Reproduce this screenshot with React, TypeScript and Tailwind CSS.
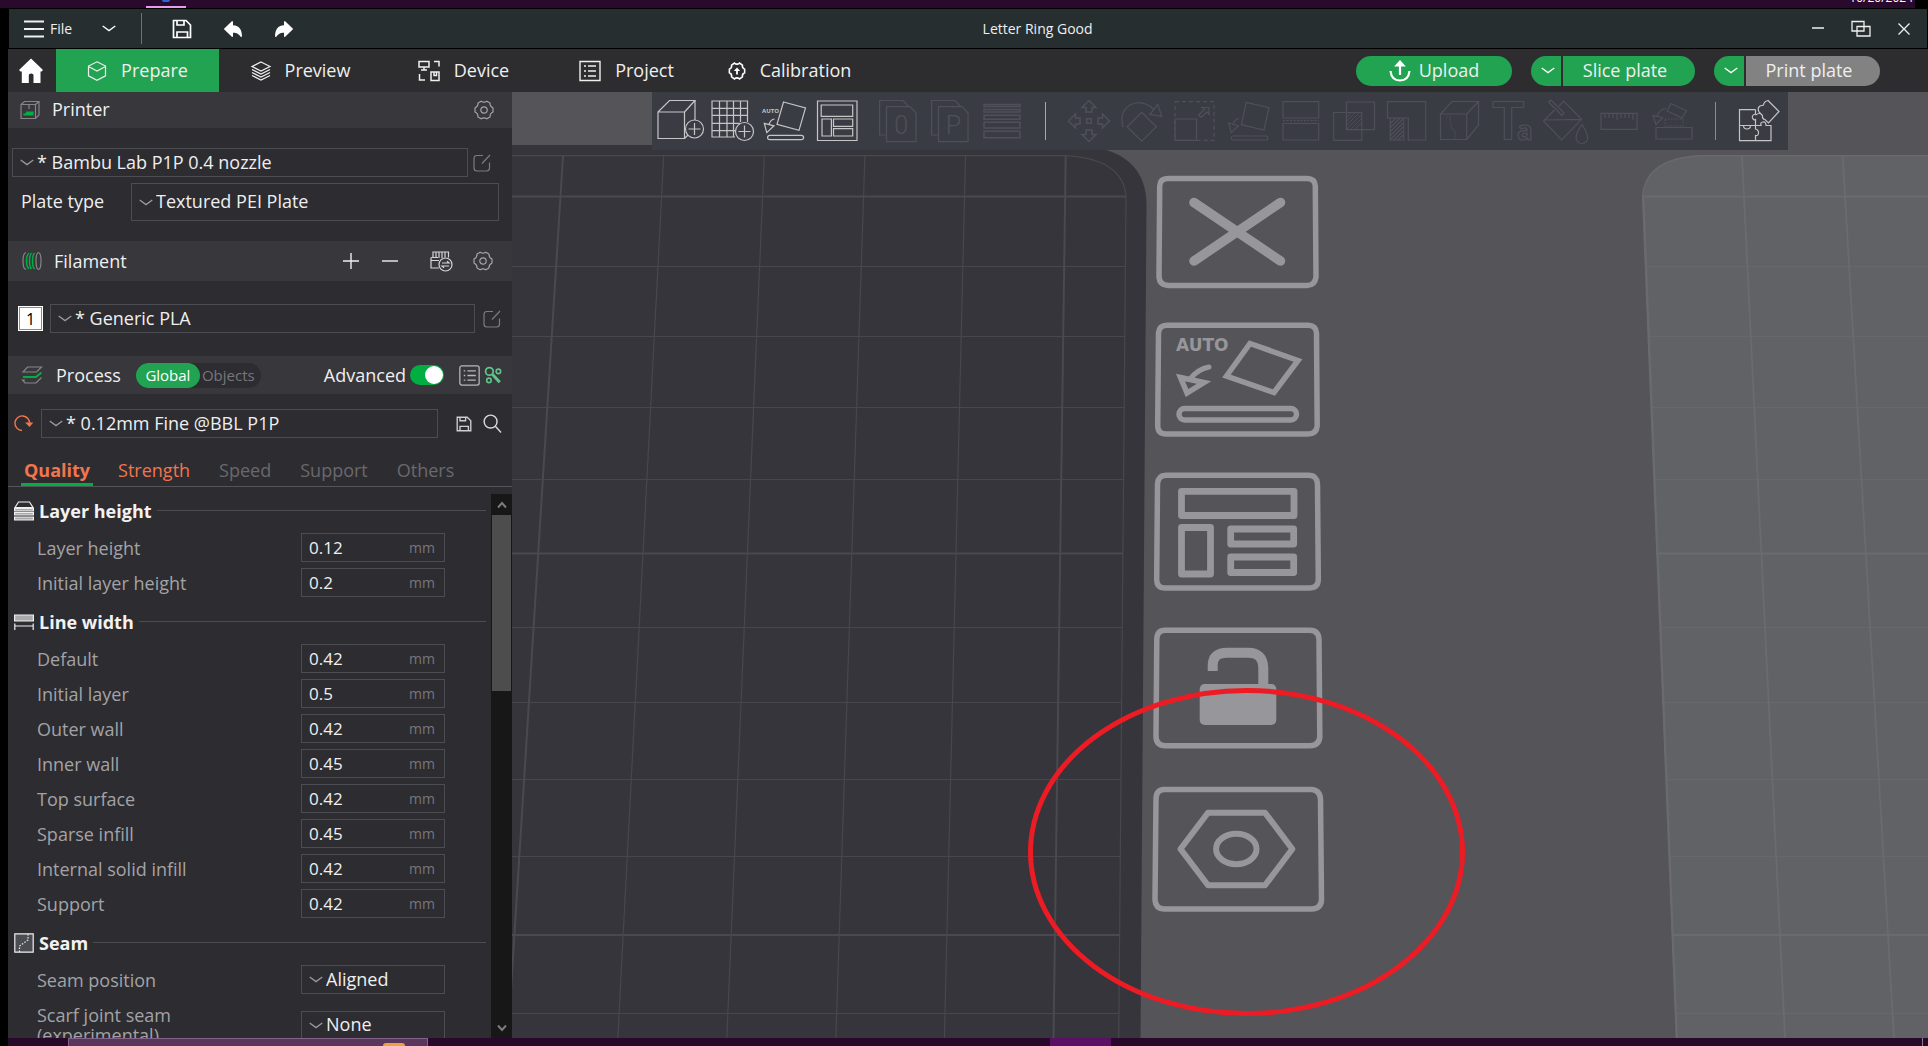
import React from "react";
import { IoArrowUndo, IoArrowRedo } from "react-icons/io5";

const layerHeight = [
  { id: "layer_height", label: "Layer height", value: "0.12" },
  { id: "initial_layer_height", label: "Initial layer height", value: "0.2" },
];

const lineWidth = [
  { id: "lw_default", label: "Default", value: "0.42" },
  { id: "lw_initial", label: "Initial layer", value: "0.5" },
  { id: "lw_outer", label: "Outer wall", value: "0.42" },
  { id: "lw_inner", label: "Inner wall", value: "0.45" },
  { id: "lw_top", label: "Top surface", value: "0.42" },
  { id: "lw_sparse", label: "Sparse infill", value: "0.45" },
  { id: "lw_solid", label: "Internal solid infill", value: "0.42" },
  { id: "lw_support", label: "Support", value: "0.42" },
];

const Svg = ({ size = 20, box = "0 0 20 20", className = "", children }: any) => (
  <svg
    width={size}
    height={size}
    viewBox={box}
    fill="none"
    stroke="currentColor"
    strokeWidth="1.2"
    className={"shrink-0 overflow-visible " + className}
    aria-hidden="true"
  >
    {children}
  </svg>
);

const Chevron = ({ className = "text-[#9a9a9d]", width = 14 }) => (
  <svg
    width={width}
    height={width / 2}
    viewBox="0 0 14 7"
    fill="none"
    stroke="currentColor"
    strokeWidth="1.3"
    className={"shrink-0 " + className}
    aria-hidden="true"
  >
    <path d="M0.7 1 L7 5.6 L13.3 1" />
  </svg>
);

const Gear = () => (
  <Svg className="text-[#a5a5a8]">
    <path d="M7.2 1.2 Q10 3.2 12.8 1.2 L16 3 Q15.8 6.4 19 8 V12 Q15.8 13.6 16 17 L12.8 18.8 Q10 16.8 7.2 18.8 L4 17 Q4.2 13.6 1 12 V8 Q4.2 6.4 4 3 Z" />
    <circle cx="10" cy="10" r="3.2" />
  </Svg>
);

const EditIcon = () => (
  <Svg size={18} box="0 0 18 18" className="text-[#7c7c80]">
    <path d="M10 1.5 H4 Q1 1.5 1 4.5 V14 Q1 17 4 17 H13.500 Q16.500 17 16.500 14 V8.500 M9 9.500 L17 1" />
  </Svg>
);

const SaveIcon = ({ size = 20, className = "" }) => (
  <Svg size={size} className={className}>
    <path d="M1.5 1.5 H14 L18.500 6 V18.500 H1.500 Z M5 1.500 V6 H12 V1.500 M5 18.500 V13 H15.500 V18.500" strokeWidth="1.700" />
  </Svg>
);

const Dropdown = ({ id, value, label, className = "" }: any) => (
  <div className={"flex items-center border border-[#4c4c53] pl-[7px] " + className}>
    <Chevron />
    <select id={id} aria-label={label} className="mb-[2px] min-w-0 flex-1 appearance-none bg-transparent pl-[3px] text-lg leading-6 text-[#efeff0] outline-none">
      <option>{value}</option>
    </select>
  </div>
);

const NumberRow = ({ id, label, value }: any) => (
  <div className="flex h-[29px] items-center">
    <label htmlFor={id} className="w-[287px] shrink-0 pl-[23px] text-lg leading-6 text-[#a3a3a6]">
      {label}
    </label>
    <div className="flex h-full w-36 items-center border border-[#4c4c53] px-[7px]">
      <input id={id} defaultValue={value} className="min-w-0 flex-1 bg-transparent text-[17px] leading-6 text-[#efeff0] outline-none" />
      <span className="pr-[2px] text-sm text-[#77777b]">mm</span>
    </div>
  </div>
);

const SectionTitle = ({ icon, children }: any) => (
  <div className="flex h-[47px] items-center pt-[2px] pr-[5px]">
    {icon}
    <h2 className="px-[5px] text-lg leading-6 font-bold text-[#f2f2f3]">{children}</h2>
    <div className="h-px flex-1 bg-[#4c4c53]" />
  </div>
);

const TitleBar = () => (
  <header className="ml-px mr-px flex h-[39px] items-center bg-[#262e30] text-sm text-[#efefef]">
    <button className="flex items-center gap-[6px] pl-[15px]">
      <Svg>
        <path d="M0 2.500 H20 M0 10 H20 M0 17.500 H20" strokeWidth="1.800" />
      </Svg>
      File
    </button>
    <button aria-label="More" className="ml-[30px]">
      <Chevron className="text-white" />
    </button>
    <div className="ml-[25px] h-[31px] w-px bg-[#6c7273]" />
    <button aria-label="Save" className="ml-[30px] text-white">
      <SaveIcon />
    </button>
    <button aria-label="Undo" className="ml-[30px] text-white">
      <IoArrowUndo size={22} />
    </button>
    <button aria-label="Redo" className="ml-[29px] text-white">
      <IoArrowRedo size={22} />
    </button>
    <h1 className="flex-1 pr-4 text-center">Letter Ring Good</h1>
    <button aria-label="Minimize" className="flex w-[43px] justify-center">
      <Svg size={14} box="0 0 14 14"><path d="M1 6 H13" strokeWidth="1.500" /></Svg>
    </button>
    <button aria-label="Restore" className="flex w-[43px] justify-center">
      <Svg><path d="M1 2.500 H13 V12 H1 Z M6 7.500 H19 V17 H6 Z" strokeWidth="1.300" /></Svg>
    </button>
    <button aria-label="Close" className="mr-[2px] flex w-[43px] justify-center">
      <Svg size={14} box="0 0 14 14"><path d="M1.500 1.500 L12.500 12.500 M12.500 1.500 L1.500 12.500" strokeWidth="1.300" /></Svg>
    </button>
  </header>
);

const tabs = [
  {
    name: "Prepare",
    icon: <Svg><path d="M10 0.800 L18.500 5 V14.800 L10 19.200 L1.500 14.800 V5 Z M1.500 5.500 L10 10 L18.500 5.500" /></Svg>,
  },
  {
    name: "Preview",
    icon: <Svg><path d="M10 1 L19 5.500 L10 10 L1 5.500 Z M1 8.500 L10 13 L19 8.500 M1 11.500 L10 16 L19 11.500 M1 14.500 L10 19 L19 14.500" /></Svg>,
  },
  {
    name: "Device",
    icon: (
      <Svg size={22} box="0 0 22 22">
        <path d="M1 1.500 H11 V7 H1 Z M6 7 V10 M3 10 H9 M16 1.500 H21 V6.500 M1.500 14 V20 H7 M13 12 H21 V20.500 H13 Z M16 12 V15.500 H18.500 V12" strokeWidth="1.500" />
      </Svg>
    ),
  },
  {
    name: "Project",
    icon: (
      <Svg size={22} box="0 0 22 22">
        <path d="M1 1.500 H21 V20.500 H1 Z" strokeWidth="1.400" />
        <path d="M5 6 H7 M9 6 H17 M5 11 H7 M9 11 H17 M5 16 H7 M9 16 H17" strokeWidth="1.500" />
      </Svg>
    ),
  },
  {
    name: "Calibration",
    icon: (
      <Svg size={18} className="text-white">
        <path d="M7.200 1.200 Q10 3.500 12.800 1.200 L16 3.500 Q15.500 6.800 18.500 8 V12 Q15.500 13.200 16 16.500 L12.800 18.800 Q10 16.500 7.200 18.800 L4 16.500 Q4.500 13.200 1.500 12 V8 Q4.500 6.800 4 3.500 Z" strokeWidth="1.700" />
        <path d="M10 14 V8" strokeWidth="2" />
        <path d="M6.500 10 L10 6 L13.500 10 Z" fill="currentColor" stroke="none" />
      </Svg>
    ),
  },
];

const TabBar = () => (
  <nav className="mt-px flex h-[43px] items-center bg-[#2d2d2f] text-lg text-[#efefef]">
    <button aria-label="Home" className="flex h-full w-12 items-center justify-center pr-[2px] text-white">
      <svg width="24" height="26" viewBox="0 0 24 26" fill="currentColor" aria-hidden="true">
        <path d="M12 0.500 L24 12 L22.500 13.500 H21.500 V25 H14.500 V17 Q14.500 15.500 12.200 15.500 Q9.800 15.500 9.800 17 V25 H2.800 V13.500 H1.500 L0 12 Z" />
      </svg>
    </button>
    {tabs.map((tab, i) => (
      <button key={tab.name} className={"flex h-full w-[163px] items-center justify-center gap-[14px] " + (i === 0 ? "bg-[#22a352]" : "")}>
        {tab.icon}
        <span className="pb-[2px]">{tab.name}</span>
      </button>
    ))}
    <div className="ml-auto flex h-[30px] gap-[19px] pr-12">
      <button className="flex w-[156px] items-center justify-center gap-2 rounded-full bg-[#22a352]">
        <Svg size={22} box="0 0 22 22" className="text-white">
          <path d="M11 15 V3" strokeWidth="2.200" />
          <path d="M6.500 6 L11 1 L15.500 6 Z" fill="currentColor" />
          <path d="M1.500 11 Q2.500 20.500 11 20.500 Q19.500 20.500 20.500 11" strokeWidth="2.200" />
        </Svg>
        <span className="pb-[2px]">Upload</span>
      </button>
      <div className="flex gap-[2px]">
        <button aria-label="Slice options" className="flex w-[30px] items-center justify-center rounded-l-full bg-[#22a352] pl-1">
          <Chevron className="text-white" />
        </button>
        <button className="w-[132px] rounded-r-full bg-[#22a352] pr-2 pb-[2px]">Slice plate</button>
      </div>
      <div className="flex gap-[2px]">
        <button aria-label="Print options" className="flex w-[30px] items-center justify-center rounded-l-full bg-[#22a352] pl-1">
          <Chevron className="text-white" />
        </button>
        <button className="w-[134px] rounded-r-full bg-[#828283] pr-2 pb-[2px]">Print plate</button>
      </div>
    </div>
  </nav>
);

const Sidebar = () => (
  <aside className="flex w-[504px] shrink-0 flex-col overflow-hidden bg-[#2d2c31] text-lg leading-6 text-[#efeff0]">
    <div className="flex h-9 items-center bg-[#38373c] pr-[18px] pl-3">
      <Svg className="text-[#85858a]">
        <path d="M1 4.500 L4.500 1.500 H19 V15 L15.500 18.500 H1 Z M1 4.500 H15.500 V18.500 M15.500 4.500 L19 1.500 M9 4.500 V9" />
        <path d="M6.500 12 H13 V15 H4 V14 H6.500 Z" fill="#00ae42" stroke="#00ae42" />
      </Svg>
      <h2 className="ml-3 flex-1 pb-[2px]">Printer</h2>
      <button aria-label="Printer settings"><Gear /></button>
    </div>
    <div className="flex flex-col gap-[6px] py-5 pl-1">
      <div className="flex items-center gap-[5px]">
        <Dropdown label="Printer" value="* Bambu Lab P1P 0.4 nozzle" className="h-[29px] w-[456px]" />
        <button aria-label="Edit printer"><EditIcon /></button>
      </div>
      <div className="flex items-center pr-[13px] pl-[9px]">
        <label htmlFor="plate_type" className="w-[110px] pb-[2px]">Plate type</label>
        <Dropdown id="plate_type" value="Textured PEI Plate" className="h-[38px] flex-1" />
      </div>
    </div>

    <div className="flex h-10 items-center bg-[#38373c] pr-[19px] pl-[14px]">
      <Svg className="text-[#85858a]">
        <path d="M4 1.500 Q1 2 1 10 Q1 18 4 18.500 M16.500 1.500 Q19 2 19 10 Q19 18 16.500 18.500 Q14 18 14 10 Q14 2 16.500 1.500" />
        <path d="M7 2 Q4.500 4 4.500 10 Q4.500 16 7 18 M9.500 2 Q7.500 4 7.500 10 Q7.500 16 9.500 18 M12.500 2 Q10.500 4 10.500 10 Q10.500 16 12.500 18" stroke="#00ae42" strokeWidth="1.500" />
      </Svg>
      <h2 className="ml-3 flex-1 pb-px">Filament</h2>
      <button aria-label="Add filament" className="mr-[23px]">
        <Svg size={16} box="0 0 16 16"><path d="M8 0 V16 M0 8 H16" strokeWidth="1.400" /></Svg>
      </button>
      <button aria-label="Remove filament" className="mr-8">
        <Svg size={16} box="0 0 16 16"><path d="M0 8 H16" strokeWidth="1.400" /></Svg>
      </button>
      <button aria-label="Sync filaments" className="mr-5">
        <Svg size={23} box="0 0 23 23" className="text-[#d5d5d7]">
          <path d="M9 18 H1 V8 L3 7 V2 H18.500 V7.500 M3 7.500 H8 M6 2 V8 M9 2 V8 M12 2 V8 M15 2 V7.500 M1 10.500 H9" />
          <circle cx="15.500" cy="14.500" r="6.500" />
          <path d="M12 13 H19 L17 11.300 M19 16 H12 L14 17.700" />
        </Svg>
      </button>
      <button aria-label="Filament settings"><Gear /></button>
    </div>
    <div className="flex items-center py-[23px] pl-[10px]">
      <div className="flex size-[25px] items-center justify-center border border-white bg-white text-base text-black outline outline-1 -outline-offset-2 outline-[#8a8a8a]">1</div>
      <Dropdown label="Filament" value="* Generic PLA" className="ml-[7px] h-[29px] w-[425px]" />
      <button aria-label="Edit filament" className="ml-2"><EditIcon /></button>
    </div>

    <div className="flex h-[38px] items-center bg-[#38373c] pr-[10px] pl-[14px]">
      <Svg className="text-[#85858a]">
        <path d="M5.500 2 H19.500 L14.500 7 H1 Z M1 15 H0.500 L3 18 H14 L19.500 12.500 M1 15 H3" />
        <path d="M1 12 H14 L19.500 7.500" stroke="#00ae42" strokeWidth="2" />
      </Svg>
      <h2 className="ml-[14px] pb-px">Process</h2>
      <div className="ml-[15px] flex h-[25px] w-[125px] rounded-full bg-[#2d2c31] text-[15px]">
        <button className="w-16 rounded-full bg-[#22a352] pb-px text-white">Global</button>
        <button className="pb-px pl-[2px] text-[#77777b]">Objects</button>
      </div>
      <span id="adv" className="ml-auto pb-px">Advanced</span>
      <button role="switch" aria-checked="true" aria-labelledby="adv" className="ml-1 flex h-5 w-[34px] items-center justify-end rounded-full bg-[#00ae42] pr-px">
        <span className="size-[18px] rounded-full bg-white" />
      </button>
      <button aria-label="Setting list" className="ml-[15px] text-[#b8b8ba]">
        <Svg size={21}>
          <rect x="0.800" y="0.800" width="18.400" height="18.400" rx="2" />
          <path d="M4.500 5.500 H6 M8 5.500 H16 M4.500 10 H6 M8 10 H16 M4.500 14.500 H6 M8 14.500 H16" />
        </Svg>
      </button>
      <button aria-label="Compare presets" className="ml-1 text-[#5fc48a]">
        <Svg size={18}>
          <circle cx="6" cy="6" r="4.200" strokeWidth="2" />
          <circle cx="16" cy="6" r="2.500" strokeWidth="1.800" />
          <circle cx="5.500" cy="16" r="2.500" strokeWidth="1.800" />
          <path d="M9.500 9.500 L17.500 18" strokeWidth="3.400" />
        </Svg>
      </button>
    </div>
    <div className="flex items-center pt-[15px] pl-[7px]">
      <button aria-label="Reset preset" className="text-[#f2754e]">
        <Svg size={17} box="0 0 17 17">
          <path d="M7 15.500 A7.300 7.300 0 1 1 14.500 9" strokeWidth="1.400" />
          <path d="M11.500 8 L14.500 11 L17 8 Z" fill="currentColor" />
        </Svg>
      </button>
      <Dropdown label="Process preset" value="* 0.12mm Fine @BBL P1P" className="ml-[9px] h-[29px] w-[397px]" />
      <button aria-label="Save preset" className="ml-[18px] text-[#cfcfd1]"><SaveIcon size={16} /></button>
      <button aria-label="Search settings" className="ml-[11px] text-[#dadadb]">
        <Svg size={19}><circle cx="8" cy="8" r="6.800" strokeWidth="1.500" /><path d="M13 13 L19 19.500" strokeWidth="1.500" /></Svg>
      </button>
    </div>
    <div className="mt-5 flex h-[29px] items-start gap-[29px] border-b border-[#54545a] pl-[13px] text-[#69696d]">
      <button className="h-[28px] border-b-[3px] border-[#00ae42] px-[3px] pb-px font-bold text-[#f2754e]">Quality</button>
      <button className="-ml-1 text-[#f2754e]">Strength</button>
      <button>Speed</button>
      <button>Support</button>
      <button>Others</button>
    </div>

    <div className="flex min-h-0 flex-1">
      <div className="-mt-px flex-1 overflow-hidden pl-[6px]">
        <SectionTitle
          icon={
            <Svg>
              <path d="M1 6.500 L4.500 1 H15.500 L19 6.500 Z" />
              <path d="M0.600 7.500 H19.400 V10 H0.600 Z M0.600 11.500 H19.400 V14 H0.600 Z M0.600 16 H19.400 V19 H0.600 Z" fill="#a9a9ab" />
            </Svg>
          }
        >
          Layer height
        </SectionTitle>
        <div className="flex flex-col gap-[6px]">
          {layerHeight.map((row) => (
            <NumberRow key={row.id} {...row} />
          ))}
        </div>
        <SectionTitle
          icon={
            <Svg>
              <path d="M0.600 3 H19.400 V9 H0.600 Z" fill="#a9a9ab" />
              <path d="M0.800 11.500 V18 M19.200 11.500 V18 M0.800 14 H19.200" />
            </Svg>
          }
        >
          Line width
        </SectionTitle>
        <div className="flex flex-col gap-[6px]">
          {lineWidth.map((row) => (
            <NumberRow key={row.id} {...row} />
          ))}
        </div>
        <SectionTitle
          icon={
            <Svg>
              <path d="M0.800 0.800 H19.200 V19.200 H0.800 Z" fill="#4c4c53" />
              <path d="M5.500 19 V13 L14 7 V1" strokeDasharray="1.500 1.500" />
            </Svg>
          }
        >
          Seam
        </SectionTitle>
        <div className="flex h-[29px] items-center">
          <label htmlFor="seam_position" className="w-[287px] pl-[23px] text-[#a3a3a6]">Seam position</label>
          <Dropdown id="seam_position" value="Aligned" className="h-full w-36" />
        </div>
        <div className="mt-[6px] flex items-center py-[5px]">
          <label htmlFor="scarf_joint" className="w-[287px] pr-20 pl-[23px] leading-5 text-[#a3a3a6]">Scarf joint seam (experimental)</label>
          <Dropdown id="scarf_joint" value="None" className="h-[29px] w-36" />
        </div>
      </div>
      <div className="mt-[7px] flex w-[21px] flex-col items-center bg-[#171717] text-[#7c7c7c]">
        <button aria-label="Scroll up" className="flex h-[21px] items-center">
          <Svg size={10} box="0 0 10 10"><path d="M1 7.500 L5 3 L9 7.500" strokeWidth="2" /></Svg>
        </button>
        <div className="h-[176px] w-[19px] bg-[#4d4d4d]" />
        <button aria-label="Scroll down" className="mt-auto flex h-[21px] items-center">
          <Svg size={10} box="0 0 10 10"><path d="M1 2.500 L5 7 L9 2.500" strokeWidth="2" /></Svg>
        </button>
      </div>
    </div>
  </aside>
);

const addTools = [
  {
    name: "Add object",
    icon: (
      <>
        <path d="M1 15 H27.500 V41.500 H1 Z M1 15 L12.500 3.500 H38 L27.500 15 M38 3.500 V23 M27.500 41.500 L31 38" />
        <circle cx="37.500" cy="32" r="9" />
        <path d="M37.500 26 V38 M31.500 32 H43.500" />
      </>
    ),
  },
  {
    name: "Add plate",
    icon: (
      <>
        <path d="M26 40 H3 V4 H38.500 V25 M10.500 4 V40 M18 4 V40 M24.500 4 V40 M31.500 4 V25 M3 11.300 H38.500 M3 18.300 H38.500 M3 26.300 H31 M3 33.700 H26" />
        <circle cx="35.500" cy="34.500" r="9" />
        <path d="M35.500 28.500 V40.500 M29.500 34.500 H41.500" />
      </>
    ),
  },
  {
    name: "Auto orient",
    icon: (
      <>
        <text x="1" y="16" fontSize="6" fontWeight="700" fill="currentColor" stroke="none">AUTO</text>
        <path d="M22.500 5 L44.500 11 L38 33.300 L16 27.300 Z M3.300 26.300 L13 28.800 L5.800 35.700 Z M8 27.500 Q9.500 22.500 13.500 22" />
        <rect x="6.600" y="38.300" width="36" height="4.400" rx="2.200" />
      </>
    ),
  },
  {
    name: "Arrange",
    icon: (
      <path d="M4.500 4 H44 V43.500 H4.500 Z M8.200 8 H39.700 V19.300 H8.200 Z M9 22 H18.400 V39 H9 Z M20.500 22 H39.700 V29.300 H20.500 Z M20.500 31.700 H39.700 V39 H20.500 Z" />
    ),
  },
];

const page = <path d="M12.500 38 H5.600 V3.500 H29 L34.500 9.500 M12.500 9.700 H36 L42 16 V44.700 H12.500 Z" />;

const objectTools = [
  {
    name: "Split to objects",
    icon: <>{page}<text x="27.300" y="36.500" fontSize="25" fontWeight="300" textAnchor="middle" fill="currentColor" stroke="none" className="font-['Roboto',sans-serif]">0</text></>,
  },
  {
    name: "Split to parts",
    icon: <>{page}<text x="27.500" y="36.500" fontSize="25" fontWeight="300" textAnchor="middle" fill="currentColor" stroke="none" className="font-['Roboto',sans-serif]">P</text></>,
  },
  {
    name: "Variable layer height",
    icon: <path d="M6 7.500 H42 V9.500 H6 Z M6 12.500 H42 V15 H6 Z M6 18.300 H42 V22.300 H6 Z M6 25.300 H42 V31 H6 Z M6 34.300 H42 V40.700 H6 Z" strokeWidth="1.500" />,
  },
];

const editTools = [
  {
    name: "Move",
    icon: (
      <path d="M24 3.500 L31 10.500 H27 V15 H21 V10.500 H17 Z M24 44.500 L31 37.500 H27 V33 H21 V37.500 H17 Z M3.500 24 L10.500 17 V21 H15 V27 H10.500 V31 Z M44.500 24 L37.500 17 V21 H33 V27 H37.500 V31 Z M21.700 21.700 H26.300 V26.300 H21.700 Z" strokeWidth="1.500" />
    ),
  },
  {
    name: "Rotate",
    icon: <path d="M23.700 15.300 L38.300 29.700 L23.700 44.200 L9.200 29.700 Z M5 30 Q1 15 12 8 Q24 1.500 35.500 12 M32 17.300 L43.700 19.300 L39.700 7.300 Z" />,
  },
  {
    name: "Scale",
    icon: (
      <>
        <path d="M4 4.700 H43 V43.300 H4 Z" strokeDasharray="4 3" />
        <path d="M4 22 H25.500 V43.300 H4 Z M27.500 18 L33.500 12.500 L31 10.500 H38 V17.500 L36 15 L30 20.500 Z" />
      </>
    ),
  },
  {
    name: "Lay on face",
    icon: (
      <>
        <path d="M22.300 5.300 L45 10.700 L40 33 L17.300 27.700 Z M4.700 26 L14.300 28.700 L7.300 35.700 Z M9 27 Q10.500 22.500 15 21.500" />
        <rect x="7.300" y="39" width="36.500" height="4" rx="2" />
      </>
    ),
  },
  {
    name: "Cut",
    icon: <><path d="M6 4.700 H41.700 V21 H6 Z M6 26.500 H41.700 V43 H6 Z" /><path d="M6 23.700 H42" strokeDasharray="2 1.500" /></>,
  },
  {
    name: "Mesh boolean",
    icon: (
      <>
        <path d="M16.500 5 H44.500 V32.700 H16.500 Z M3.700 15.500 H31.700 V43.300 H3.700 Z" />
        <path d="M17 20 L21 16 M17 24 L25 16 M17 28 L29 16 M17 32 L31 18 M21 32 L31 22 M25 32 L31 26" strokeWidth="0.800" />
      </>
    ),
  },
  {
    name: "Support painting",
    icon: (
      <>
        <path d="M4.500 4.700 H42.700 V43 H25.300 V21 H4.500 Z M7.300 21 H20.700 V43 H7.300 Z" />
        <path d="M7 27 L13 21 M7 31 L17 21 M7 35 L20 22 M7 39 L20 26 M7 43 L20 30 M11 43 L20 34 M15 43 L20 38" />
      </>
    ),
  },
  {
    name: "Seam painting",
    icon: (
      <>
        <path d="M4.500 17 H30.700 V42.500 H4.500 Z M4.500 17 L16 4.500 H42.500 L30.700 17 M42.500 4.500 V28 L30.700 42.500" />
        <path d="M10 20 H14 L15 30 L19 34 V42" strokeDasharray="1.500 1.500" />
      </>
    ),
  },
  {
    name: "Text shape",
    icon: (
      <>
        <path d="M4 4.500 H34.700 V10.500 H22.700 V42.500 H15.300 V10.500 H4 Z" />
        <text x="28" y="42.500" fontSize="26" fontWeight="700" fill="none">a</text>
      </>
    ),
  },
  {
    name: "Color painting",
    icon: (
      <path d="M17 9 L21.700 4 L39.500 22.300 L19.700 43 L1.500 24 L12.500 13 M2 23 L39 22.300 M6.500 5 L9 3 L22 16 L20 18.500 Z M40 27.500 Q34 36 34 41 Q35 46.500 40 46.500 Q45.500 46 45.700 41 Q45.500 36 40 27.500 Z" />
    ),
  },
  {
    name: "Measure",
    icon: <path d="M6 16.300 H42 V32.300 H6 Z M10 16.500 V21 M14 16.500 V21 M18 16.500 V21 M22 16.500 V23 M26 16.500 V21 M30 16.500 V21 M34 16.500 V21 M38 16.500 V23" />,
  },
  {
    name: "Assemble",
    icon: (
      <>
        <path d="M8 30.500 H44 V42 H8 Z M23 6.500 L38.500 13.700 L34 21 L19 14 Z M5 18.300 L14.500 20.500 L8 27.700 Z M9 19 Q11 13 18 11" />
        <path d="M17 22 H35 V29 H17 Z" strokeDasharray="1.500 1.500" />
      </>
    ),
  },
];

const ToolButton = ({ name, icon }: any) => (
  <button aria-label={name} className="flex w-[52px] justify-center">
    <Svg size={48} box="0 0 48 48">{icon}</Svg>
  </button>
);

const Toolbar = () => (
  <div className="absolute top-0 left-[140px] flex h-[58px] items-center bg-[#3a3c44] px-[3px] text-[#4f4f59]">
    <div className="flex text-[#c4c5c6]">
      {addTools.map((t) => (
        <ToolButton key={t.name} {...t} />
      ))}
    </div>
    <div className="ml-[9px] flex">
      {objectTools.map((t) => (
        <ToolButton key={t.name} {...t} />
      ))}
    </div>
    <div className="mx-[17px] h-[38px] w-px bg-[#a9a9ab]" />
    <div className="flex gap-px">
      {editTools.map((t) => (
        <ToolButton key={t.name} {...t} />
      ))}
    </div>
    <div className="mx-[17px] h-[38px] w-px bg-[#8c8c90]" />
    <div className="flex text-[#c4c5c6]">
      <ToolButton
        name="Assembly view"
        icon={
          <path d="M20.500 12.700 H4.500 V43.700 H36 V28.500 H31 Q31 24.500 28 25 Q25 25.500 26 28.500 H4.500 M8.500 28.500 Q8.500 32 12 32 Q15.500 32 15.500 28.500 M20.500 12.700 V17 Q16.500 18 17.500 21 Q18.500 23.500 20.500 22.500 V32 Q24 33 23.500 36.500 Q23 39 20.500 38.500 V43.700 M20.500 18 Q25 15 27 18 M24 15 Q22 11 25 9 L28.500 8 Q29 4.500 33 3.500 L44 14.500 L33.500 26 L30 22.500 Q27 22 27.500 18.500 L24 15" />
        }
      />
    </div>
  </div>
);

// rows of the bed grid, shared by both plates
const rows = [267, 337, 408, 480, 554, 628, 703, 780, 857, 935, 1014];

const Viewport = () => (
  <main className="relative min-w-0 flex-1 overflow-hidden bg-[#555459]">
    <svg className="block h-full w-full" viewBox="512 92 1416 946" preserveAspectRatio="xMinYMin slice" fill="none" aria-label="Build plate">
      <path d="M500 145 H1075 Q1146 148 1146.500 205 L1140.500 1040 H500 Z" fill="#36353b" />
      <g stroke="#48474d" strokeWidth="1.200">
        <path d="M500 155.600 H1068 Q1124 160 1126 197 L1118.700 1040" />
        {rows.map((y) => (
          <path key={y} d={`M500 ${y - 0.5} H${1126.5 - (y - 197) * 0.0087}`} />
        ))}
        <path d="M663.700 156 L617.800 1038 M764.300 156 L726.800 1038 M864.900 156 L835.800 1038 M965.500 156 L944.400 1038" />
      </g>
      <path d="M500 196.500 H1126 M500 553.500 H1123 M500 935 H1120 M563 156 L508 1038 M1065.700 156 L1053.500 1038" stroke="#4a494f" strokeWidth="2" />

      <path d="M1701 155.600 H1940 V1040 H1676.300 L1642.500 197 Q1645 158 1701 155.600 Z" fill="#616266" stroke="#6a6b6f" strokeWidth="1.200" />
      <g stroke="#67686c" strokeWidth="1.200">
        {rows.map((y) => (
          <path key={y} d={`M${1642.5 + (y - 197) * 0.0402} ${y - 0.5} H1940`} />
        ))}
      </g>
      <path d="M1643 196.500 H1940 M1657 553.500 H1940 M1672 935 H1940 M1742 156 L1785 1038 M1842.700 156 L1894 1038 M1643.500 197 L1677 1038" stroke="#6a6b6f" strokeWidth="1.800" />

      <g stroke="#97969a" strokeWidth="5.500">
        <path d="M1168 178.500 H1307 Q1315 178.500 1315.300 186 L1316 277 Q1315 285.500 1307 285.500 H1168 Q1159.500 285 1159 277 L1159.700 186 Q1160 178.500 1168 178.500 Z" />
        <path d="M1194 202.500 L1280.500 261 M1280.500 202.500 L1194 261" strokeWidth="9.500" strokeLinecap="round" />

        <path d="M1167 325.300 H1308 Q1316 325.500 1316.500 333 L1317.200 426 Q1316.500 434 1308 434 H1166 Q1158 434 1157.700 426 L1158.500 333 Q1159 325.500 1167 325.300 Z" />
        <path d="M1250 343.500 L1298 360.500 L1274 392.500 L1226.500 376 Z M1180.500 377.500 L1204 382.500 L1187 393 Z" strokeWidth="5.500" />
        <path d="M1190 379 Q1198 369 1209 367" strokeWidth="5" strokeLinecap="round" />
        <rect x="1179" y="408.500" width="117.500" height="11.500" rx="5.700" />

        <path d="M1166 475.300 H1309 Q1317 475.500 1317.500 484 L1318.300 580 Q1318 588 1309 588 H1165 Q1157 588 1156.700 580 L1157.500 484 Q1158 475.500 1166 475.300 Z" />
        <g strokeWidth="6.800" strokeLinejoin="round">
          <path d="M1181.500 491.300 H1294 V515.500 H1181.500 Z M1181.500 527.500 H1210.500 V574 H1181.500 Z M1230.700 529 H1293.700 V544 H1230.700 Z M1230.700 557 H1293.700 V572.500 H1230.700 Z" />
        </g>

        <path d="M1165 630.200 H1310 Q1318.500 630.500 1319 639 L1319.800 737 Q1319 745.500 1310 745.700 H1165 Q1156.500 745.500 1156 737 L1156.800 639 Q1157 630.500 1165 630.200 Z" />
        <path d="M1212.700 671 V665 Q1213 652.700 1227 652.700 H1248 Q1263 652.700 1263.300 668 V686" strokeWidth="10" />
        <rect x="1199.700" y="684" width="76.600" height="41" rx="5" fill="#97969a" stroke="none" />

        <path d="M1164 789.500 H1311 Q1320 790 1320.500 799 L1321.500 900 Q1321 908.500 1312 909 H1164 Q1155.500 908.500 1155 900 L1156 799 Q1156 790 1164 789.500 Z" />
        <path d="M1180.500 849 L1208 812.700 H1265 L1292.300 849 L1265 885.300 H1208 Z" strokeWidth="6" strokeLinejoin="round" />
        <ellipse cx="1236.300" cy="849" rx="20.200" ry="15.200" strokeWidth="6" />
      </g>
      <text x="1176" y="351" fontSize="17" fontWeight="700" fill="#97969a" className="font-['DejaVu_Sans',sans-serif]">AUTO</text>
      <ellipse cx="1246.500" cy="852" rx="216" ry="161.500" stroke="#ed1c24" strokeWidth="5" />
    </svg>
    <Toolbar />
  </main>
);

const App = () => {
  return (
    <div className="flex h-screen flex-col overflow-hidden bg-black font-['Open_Sans','Noto_Sans',sans-serif]">
      <div className="mr-[13px] mb-px flex h-2 items-end overflow-hidden bg-[#2a0a2c] pl-[146px]">
        <div className="flex h-full w-10 flex-col items-center justify-between">
          <div className="h-[2px] w-2 rounded-b-full bg-[#2f62d8]" />
          <div className="h-[2px] w-full bg-[#e59df0]" />
        </div>
        <span className="mb-[2px] ml-auto pr-[2px] text-xs text-white">10/20/2024</span>
      </div>
      <div className="flex min-h-0 flex-1 flex-col pl-2">
        <TitleBar />
        <TabBar />
        <div className="flex min-h-0 flex-1">
          <Sidebar />
          <Viewport />
        </div>
        <div className="flex h-2 bg-[#29092b] pl-[60px]">
          <div className="flex h-full w-[360px] justify-end border border-b-0 border-[#85628a] bg-[#5b365c] pr-[22px]">
            <div className="mt-1 h-[3px] w-[22px] rounded-t-full bg-[#f0a040]" />
          </div>
          <div className="ml-[622px] h-full w-[61px] bg-[#5c1065]" />
          <div className="mr-[5px] ml-auto h-full w-px bg-[#8a7a8c]" />
        </div>
      </div>
    </div>
  );
};

export default App;
